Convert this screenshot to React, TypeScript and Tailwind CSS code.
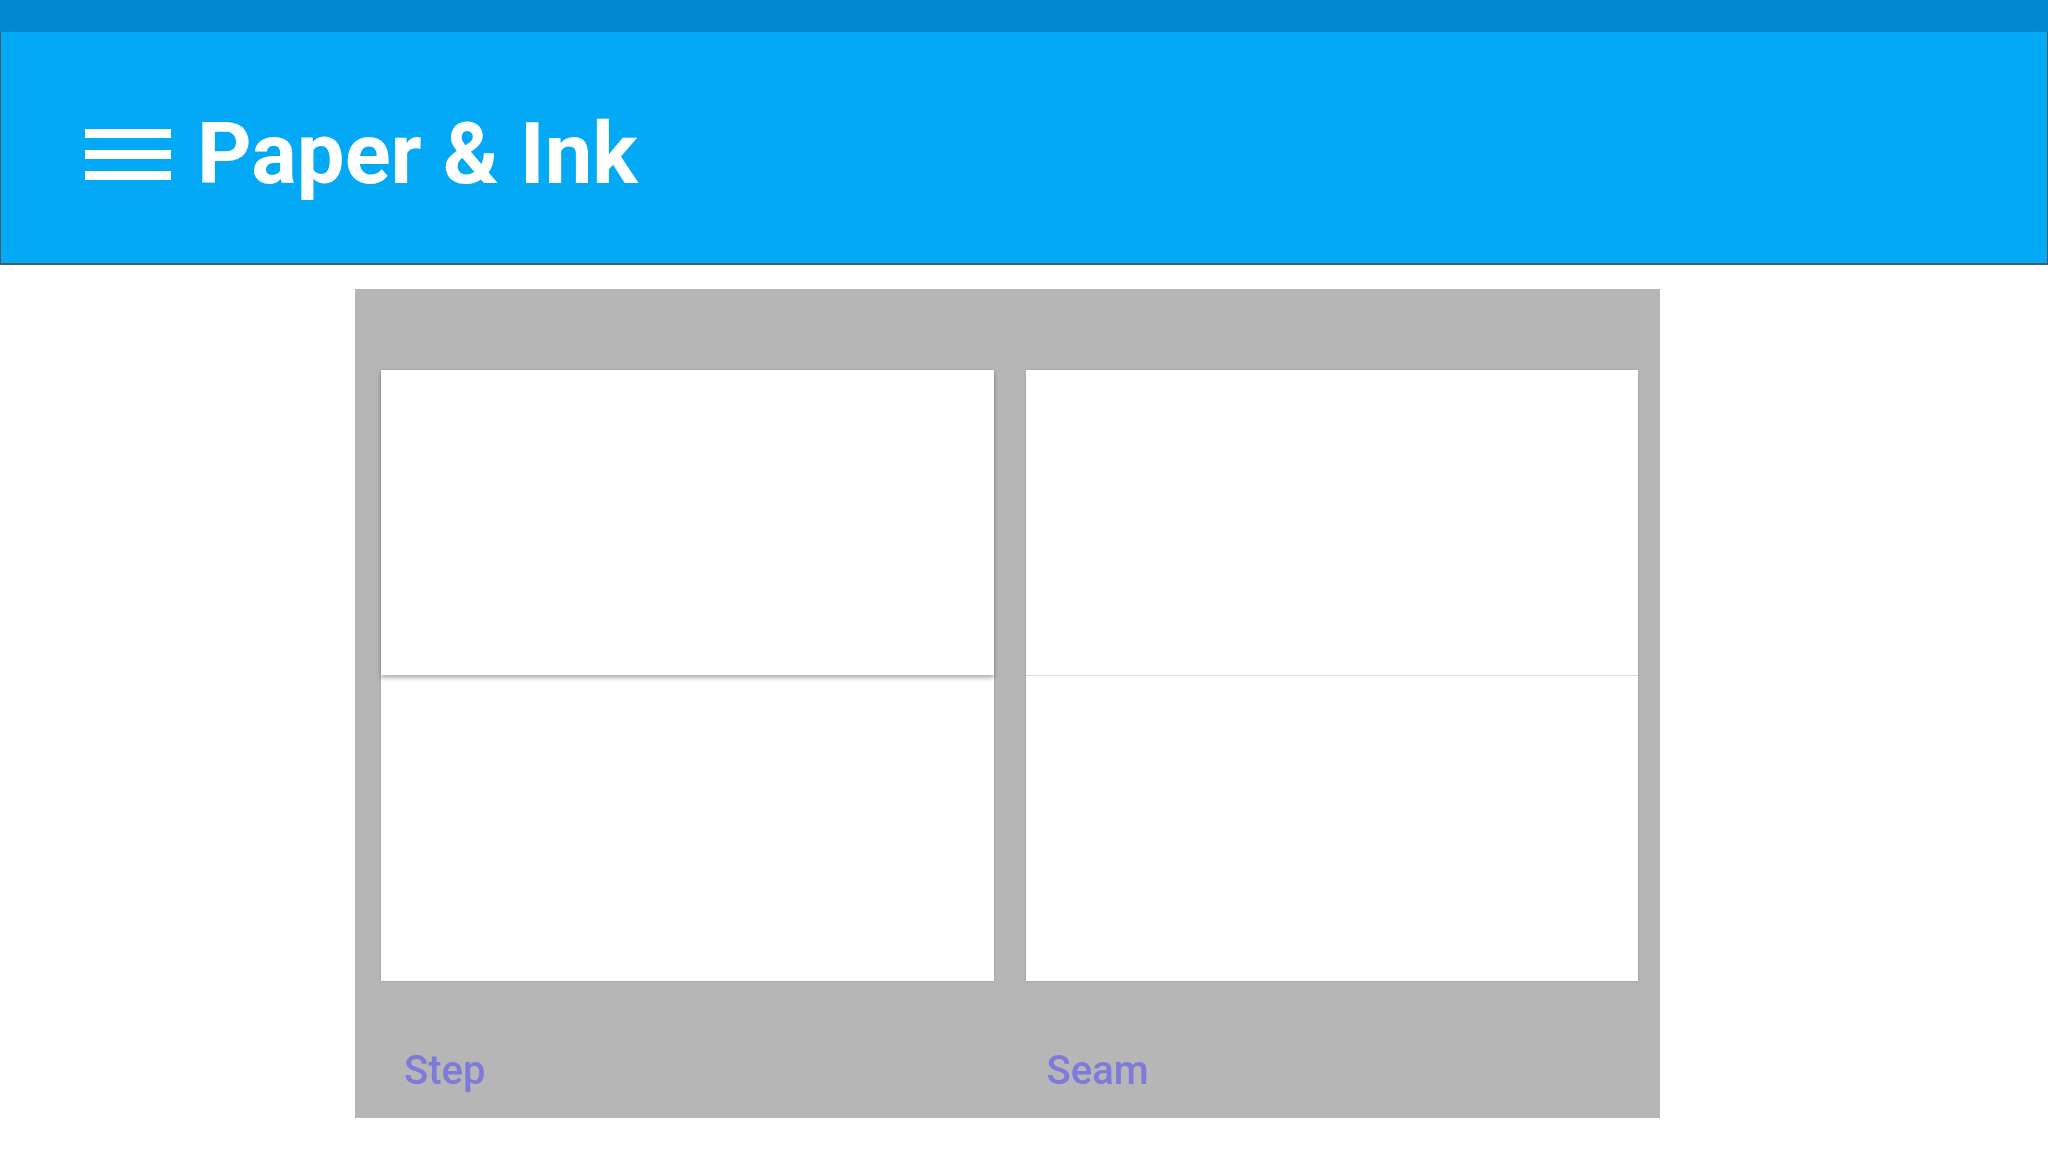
import React from "react";

const ROBOTO = "font-['Roboto','Liberation_Sans',sans-serif]";

function Hamburger() {
  return (
    <div className="flex flex-col gap-[12px] w-[86px]">
      <div className="h-[9px] bg-white" />
      <div className="h-[9px] bg-white" />
      <div className="h-[9px] bg-white" />
    </div>
  );
}

function Card({ kind }: { kind: "step" | "seam" }) {
  if (kind === "step") {
    return (
      <div className="flex flex-col h-[611px] bg-white shadow-[0_0_2px_rgba(0,0,0,0.18)]">
        <div className="h-[305px] bg-white relative z-10 shadow-[0_3px_4px_rgba(0,0,0,0.3)]" />
        <div className="flex-1 bg-white mt-[2px]" />
      </div>
    );
  }
  return (
    <div className="flex flex-col h-[611px] bg-white shadow-[0_0_2px_rgba(0,0,0,0.18)]">
      <div className="h-[306px] bg-white border-b border-[#dedede]" />
      <div className="flex-1 bg-white" />
    </div>
  );
}

export default function App() {
  return (
    <div className={`min-h-[1152px] bg-white ${ROBOTO}`}>
      <div className="h-[32px] bg-[#0288d1]" />
      <header className="h-[233px] bg-[#03a9f4] border-x border-b-2 border-[#4a5a66] flex items-center pl-[84px] pt-[14px]">
        <Hamburger />
        <h1 className="ml-[26px] text-white text-[85px] font-bold leading-none">
          Paper &amp; Ink
        </h1>
      </header>

      <main className="pt-[24px] pl-[355px]">
        <div className="w-[1305px] h-[829px] bg-[#b6b6b6] pt-[81px] pl-[26px] pr-[22px] flex flex-col">
          <div className="grid grid-cols-2 gap-[32px]">
            <Card kind="step" />
            <Card kind="seam" />
          </div>
          <div className="grid grid-cols-2 gap-[32px] pt-[70px]">
            <div className="pl-[23px] text-[40px] font-medium leading-none text-[#7d7ada] blur-[0.6px]">Step</div>
            <div className="pl-[21px] text-[40px] font-medium leading-none text-[#7d7ada] blur-[0.6px]">Seam</div>
          </div>
        </div>
      </main>
    </div>
  );
}
